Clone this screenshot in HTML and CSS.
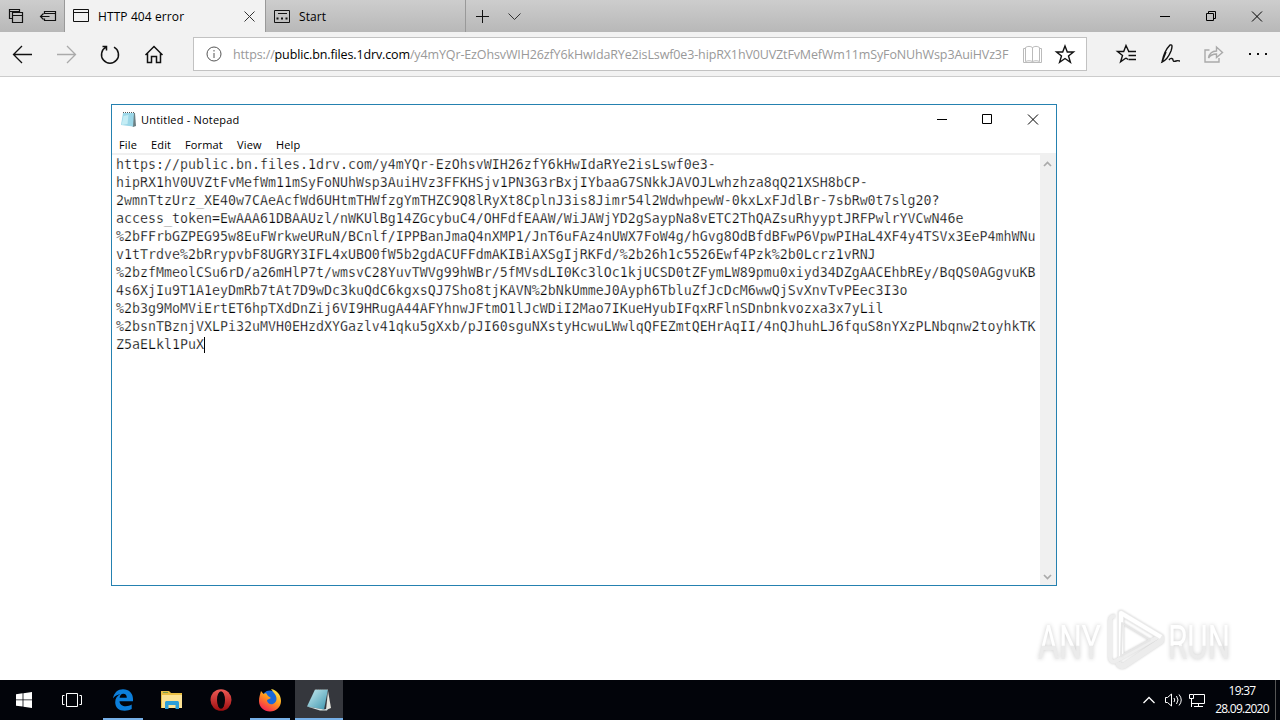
FILE: index.html
```html
<!DOCTYPE html>
<html lang="en">
<head>
    <meta charset="UTF-8">
    <meta name="viewport" content="width=device-width, initial-scale=1.0">
    <title>HTTP 404 error</title>
    <link rel="stylesheet" href="styles.css">
</head>
<body>
    <div class="desktop">
        <!-- browser tabs -->
        <div class="tabbar">
            <div class="tab-tools">
                <svg width="65" height="32" viewBox="0 0 65 32" fill="none" stroke="#111" stroke-width="1.200">
                    <path d="M12.500 18.500h-3v-9h10v3M9.500 11.500h10M12.500 12.500h10v10h-10zM12.500 15.500h10"/>
                    <path d="M44.500 14v-2.500h11v9h-11v-2M44.500 13.500h11M40.500 16.500h9M43.500 13.500l-3 3 3 3"/>
                </svg>
            </div>
            <div class="tab active">
                <svg width="16" height="14" viewBox="0 0 16 14" fill="none" stroke="#111"><path d="M.5.5h15v12H.5zM.5 3.500h15"/></svg>
                <span class="tab-title">HTTP 404 error</span>
                <svg class="tab-close" width="11" height="11" viewBox="0 0 11 11" stroke="#333"><path d="M.5.5l10 10M10.500.5l-10 10"/></svg>
            </div>
            <div class="tab">
                <svg width="16" height="13" viewBox="0 0 16 13" fill="none" stroke="#111"><path d="M.5.5h15v12H.5zM4 3.500h9"/><path d="M2.500 7.500h2v2h-2zM7 7.500h2v2H7zM11.500 7.500h2v2h-2z" fill="#111" stroke="none"/></svg>
                <span class="tab-title">Start</span>
            </div>
            <div class="tab-actions">
                <svg width="60" height="32" viewBox="0 0 60 32" fill="none" stroke="#111"><path d="M10 16.500h13M16.500 10v13"/><path d="M42.500 13.500l6 6 6-6" stroke="#333"/></svg>
            </div>
            <svg class="window-buttons" width="138" height="32" viewBox="0 0 138 32" fill="none" stroke="#000">
                <path d="M18 16.500h10M64.500 13.500h7v7h-7zM66.500 13v-1.500h7v7H72M110 11.500l10 10M120 11.500l-10 10"/>
            </svg>
        </div>

        <!-- address bar -->
        <div class="toolbar">
            <svg class="nav-buttons" width="193" height="44" viewBox="0 0 193 44" fill="none" stroke="#111" stroke-width="1.300">
                <path d="M32 22.500H13.500M22 14l-8.500 8.500L22 31"/>
                <path d="M57 22.500h18.500M67 14l8.500 8.500L67 31" stroke="#aaa"/>
                <path d="M106 15.200a8.500 8.500 0 1 0 8 0M102.500 14.500h4v4" stroke-width="1.500"/>
                <path d="M145.500 23l8.500-8.500 8.500 8.500M147.500 21.500v9h4v-6h5v6h4v-9" stroke-width="1.500"/>
            </svg>
            <div class="address">
                <svg width="16" height="16" viewBox="0 0 16 16" fill="none" stroke="#555"><circle cx="8" cy="8" r="7"/><path d="M8 7v5M8 4v1.500"/></svg>
                <div class="url">https://<span class="host">public.bn.files.1drv.com</span>/y4mYQr-EzOhsvWIH26zfY6kHwIdaRYe2isLswf0e3-hipRX1hV0UVZtFvMefWm11mSyFoNUhWsp3AuiHVz3F</div>
                <svg width="72" height="32" viewBox="0 0 72 32" fill="none">
                    <path d="M18.500 9.500c-2-1.500-5-1.500-7 0v14c2-1 5-1 7 0 2-1 5-1 7 0v-14c-2-1.500-5-1.500-7 0zM18.500 9.500v14M11.500 10.500h-2v14h18v-14h-2" stroke="#bbb"/>
                    <path d="M51 8l2.300 6h6.200l-5 4 1.900 6.300-5.400-3.800-5.400 3.800 1.900-6.300-5-4h6.200z" stroke="#111" stroke-width="1.400"/>
                </svg>
            </div>
            <svg class="hub-buttons" width="193" height="44" viewBox="0 0 193 44" fill="none" stroke="#111" stroke-width="1.400">
                <path d="M45 19.500h-3.200L39 13.500l-2.300 6h-6.200l5 4-1.900 6.300 5.400-3.800M41 19.500h8M41.500 23.500H49M41.500 27.500H49M39 26l2 1.500"/>
                <path d="M75 30c1-5 4-13 8-17 3-1 2 3 1 6-2 5-4 9-9 11l4-10M82 28c2-3 4-1 4 0s1 2 3 1 3 0 4 0"/>
                <path d="M122.500 18h-4.500v12h14v-4M121.500 26c1-5 4-7 8-7v-4l6 5.500-6 5v-3.500c-4 0-6 1-8 4z" stroke="#aaa"/>
                <path d="M162 21h2v2h-2zM170 21h2v2h-2zM178 21h2v2h-2z" fill="#111" stroke="none"/>
            </svg>
        </div>

        <div class="page">
            <svg class="watermark" width="210" height="76" viewBox="0 0 210 76">
                <defs>
                    <linearGradient id="fade" x1="0" y1="0" x2="0" y2="1">
                        <stop offset="0.550" stop-color="#fff"/>
                        <stop offset="0.560" stop-color="#ebebeb"/>
                    </linearGradient>
                </defs>
                <g class="mark-text" fill="url(#fade)">
                    <text x="9" y="57" textLength="63" lengthAdjust="spacingAndGlyphs">ANY</text>
                    <text x="139" y="57" textLength="62" lengthAdjust="spacingAndGlyphs">RUN</text>
                </g>
                <g class="mark-logo" fill="none" stroke-linejoin="round">
                    <path d="M86 14c-4 0-5 2-5 5v36c0 4 3 6 6 4l42-24" stroke="#eee" stroke-width="4"/>
                    <path d="M92 56V11l40 24v4L96 63c-3 2-6 1-7-3" stroke="#ececec" stroke-width="6"/>
                    <path d="M92 54V11l40 24" stroke="#fff" stroke-width="4"/>
                    <path d="M93 21l28 17-29 16z" stroke="#e6e6e6" stroke-width="2"/>
                </g>
            </svg>
        </div>

        <!-- taskbar -->
        <div class="taskbar">
            <div class="task">
                <svg width="16" height="16" viewBox="0 0 16 16" fill="#fff"><path d="M0 2.200l6.600-.9v6.200H0zM7.400 1.200L16 0v7.500H7.400zM0 8.300h6.600v6.300L0 13.700zM7.400 8.300H16V16l-8.600-1.200z"/></svg>
            </div>
            <div class="task view-button">
                <svg width="20" height="14" viewBox="0 0 20 14" fill="none" stroke="#fff"><path d="M4.500.5h11v13h-11zM2.500 2.500h-2v9h2M17.500 2.500h2v9h-2"/></svg>
            </div>
            <div class="task running">
                <svg width="20" height="22" viewBox="0 0 20 22" fill="#0c7fdb"><path d="M0 9.500C1 3.500 5 .3 10 .3c6 0 10 4 10 9.700v2.300H6.500c.2 3.500 3 5 6.200 5 2.200 0 4.300-.7 6-1.700v4.500c-2 1-4.500 1.600-7 1.600-6 0-9.500-3.300-9.500-8.500 0-3.700 2-6.700 5.200-8.200C4.300 5.700 1.800 7 0 9.500zM6.600 8.800h7.200c0-2.500-1.300-4-3.500-4s-3.500 1.700-3.700 4z"/></svg>
            </div>
            <div class="task">
                <svg width="22" height="18" viewBox="0 0 22 18"><path d="M0 0h8l2 2h11v15H0z" fill="#e9bf45"/><path d="M1 4h20v13H1z" fill="#fbe294"/><path d="M2 1h5v1H2z" fill="#7a9c4d"/><path d="M4 18v-6c0-1.500.5-2 2-2h10c1.500 0 2 .5 2 2v6h-3.500v-4h-7v4z" fill="#2c9fd9"/></svg>
            </div>
            <div class="task">
                <svg width="22" height="22" viewBox="0 0 22 22">
                    <defs><linearGradient id="opera" x1="0" y1="0" x2="0" y2="1"><stop offset="0" stop-color="#ee5a55"/><stop offset="1" stop-color="#9d0d0f"/></linearGradient></defs>
                    <ellipse cx="11" cy="11" rx="10.500" ry="10.800" fill="url(#opera)"/><ellipse cx="11" cy="11" rx="4" ry="8.800" fill="#05060b"/>
                </svg>
            </div>
            <div class="task running">
                <svg width="24" height="24" viewBox="0 0 24 24">
                    <defs><linearGradient id="fox" x1="0.800" y1="0" x2="0.200" y2="1"><stop offset="0" stop-color="#fff04a"/><stop offset="0.450" stop-color="#ff9a1a"/><stop offset="1" stop-color="#f51858"/></linearGradient></defs>
                    <circle cx="12" cy="11" r="8.500" fill="#1768d8"/>
                    <path d="M3 3l2.500 3L8 5l2 3 3 2-4 2c0 3 3 5 6 4 5-2 4-8 1-11l-3-4c6 1 10 6 10 12 0 6-5 10.500-11 10.500S1 19 1 13C1 9 2 7 3 3z" fill="url(#fox)"/>
                </svg>
            </div>
            <div class="task running current">
                <svg width="26" height="24" viewBox="0 0 26 24">
                    <defs><linearGradient id="pad" x1="0" y1="0" x2="1" y2="1"><stop offset="0" stop-color="#c9edf2"/><stop offset="1" stop-color="#3c94ad"/></linearGradient></defs>
                    <path d="M22 3l3 17-5 2z" fill="#e6e6df"/><path d="M9 1.500h13l-4 20L1 18.500z" fill="url(#pad)"/><path d="M1 18.500l17 3 4-1-1 2H14z" fill="#d7e5e5"/><path d="M9 1.500h13" stroke="#777" stroke-dasharray="1 1"/>
                </svg>
            </div>
            <div class="tray">
                <svg width="70" height="20" viewBox="0 0 70 20" fill="none" stroke="#fff">
                    <path d="M3.500 13l5.500-5.500 5.500 5.500" stroke-width="1.300"/>
                    <path d="M25.500 7.500h2l4-3.500v12l-4-3.500h-2zM34 8q1.500 2 0 4M36.500 6q3 4 0 8M39 4.500q4.500 5.500 0 11"/>
                    <path d="M54 4.500h10.500v9H51.500V9M49.500 4.500h4v4h-4zM58.500 13.500v3M54 16.500h9M51.500 8.500V17"/>
                </svg>
                <div class="clock">
                    <div class="time">19:37</div>
                    <div class="date">28.09.2020</div>
                </div>
                <div class="show-desktop"></div>
            </div>
        </div>

        <!-- notepad window -->
        <div class="notepad">
            <div class="titlebar">
                <svg width="17" height="17" viewBox="0 0 17 17"><path d="M4 2h11l1 13-3 1z" fill="#6c7f83"/><path d="M3 2h11l-1 13.500L1 14z" fill="#9bd7e8"/><path d="M3.500 5l5-1-1 9-6 1z" fill="#c4edf5"/><path d="M3 1.500h12" stroke="#555" stroke-dasharray="1 1"/></svg>
                <span class="title">Untitled - Notepad</span>
                <svg class="window-buttons" width="138" height="28" viewBox="0 0 138 28" fill="none" stroke="#000"><path d="M19 14.500h10M64.500 9.500h9v9h-9zM110 9.500l10 10M120 9.500l-10 10"/></svg>
            </div>
            <div class="menubar">
                <span class="menu file">File</span>
                <span class="menu edit">Edit</span>
                <span class="menu format">Format</span>
                <span class="menu view">View</span>
                <span class="menu help">Help</span>
            </div>
            <div class="editor">
<pre class="text">https://public.bn.files.1drv.com/y4mYQr-EzOhsvWIH26zfY6kHwIdaRYe2isLswf0e3-
hipRX1hV0UVZtFvMefWm11mSyFoNUhWsp3AuiHVz3FFKHSjv1PN3G3rBxjIYbaaG7SNkkJAVOJLwhzhza8qQ21XSH8bCP-
2wmnTtzUrz_XE40w7CAeAcfWd6UHtmTHWfzgYmTHZC9Q8lRyXt8CplnJ3is8Jimr54l2WdwhpewW-0kxLxFJdlBr-7sbRw0t7slg20?
access_token=EwAAA61DBAAUzl/nWKUlBg14ZGcybuC4/OHFdfEAAW/WiJAWjYD2gSaypNa8vETC2ThQAZsuRhyyptJRFPwlrYVCwN46e
%2bFFrbGZPEG95w8EuFWrkweURuN/BCnlf/IPPBanJmaQ4nXMP1/JnT6uFAz4nUWX7FoW4g/hGvg8OdBfdBFwP6VpwPIHaL4XF4y4TSVx3EeP4mhWNu
v1tTrdve%2bRrypvbF8UGRY3IFL4xUBO0fW5b2gdACUFFdmAKIBiAXSgIjRKFd/%2b26h1c5526Ewf4Pzk%2b0Lcrz1vRNJ
%2bzfMmeolCSu6rD/a26mHlP7t/wmsvC28YuvTWVg99hWBr/5fMVsdLI0Kc3lOc1kjUCSD0tZFymLW89pmu0xiyd34DZgAACEhbREy/BqQS0AGgvuKB
4s6XjIu9T1A1eyDmRb7tAt7D9wDc3kuQdC6kgxsQJ7Sho8tjKAVN%2bNkUmmeJ0Ayph6TbluZfJcDcM6wwQjSvXnvTvPEec3I3o
%2b3g9MoMViErtET6hpTXdDnZij6VI9HRugA44AFYhnwJFtmO1lJcWDiI2Mao7IKueHyubIFqxRFlnSDnbnkvozxa3x7yLil
%2bsnTBznjVXLPi32uMVH0EHzdXYGazlv41qku5gXxb/pJI60sguNXstyHcwuLWwlqQFEZmtQEHrAqII/4nQJhuhLJ6fquS8nYXzPLNbqnw2toyhkTK
Z5aELkl1PuX<span class="caret"></span></pre>
                <div class="scrollbar">
                    <svg width="9" height="6" viewBox="0 0 9 6" fill="none" stroke="#aaa" stroke-width="1.700"><path d="M1 5l3.500-3.500L8 5"/></svg>
                    <svg width="9" height="6" viewBox="0 0 9 6" fill="none" stroke="#aaa" stroke-width="1.700"><path d="M1 1l3.500 3.500L8 1"/></svg>
                </div>
            </div>
        </div>
    </div>
</body>
</html>
```
FILE: styles.css
```css
body {
    margin: 0;
    font-family: "Open Sans", "Noto Sans", sans-serif;
    font-size: 12px;
    color: #000;
    background: #fff;
    overflow: hidden;
}
svg {
    display: block;
    flex: none;
}
.desktop {
    position: relative;
    width: 1280px;
    height: 720px;
    display: flex;
    flex-direction: column;
}
.tabbar {
    height: 32px;
    display: flex;
    background: linear-gradient(#cdcdcd, #b8b8b8);
}
.tab-tools {
    width: 64px;
    border-right: 1px solid #999;
    overflow: hidden;
}
.tab {
    box-sizing: border-box;
    width: 200px;
    padding: 0 10px 0 8px;
    display: flex;
    align-items: center;
    border-right: 1px solid #999;
}
.tab.active {
    padding-left: 8px;
    background: #f2f2f2;
    width: 201px;
}
.tab-title {
    margin-left: 9px;
    letter-spacing: 0.1px;
}
.tab-close {
    margin-left: auto;
}
.window-buttons {
    margin-left: auto;
}
.toolbar {
    box-sizing: border-box;
    height: 45px;
    display: flex;
    background: #f2f2f2;
    border-bottom: 1px solid #ccc;
}
.address {
    box-sizing: border-box;
    width: 894px;
    height: 34px;
    margin-top: 5px;
    padding-left: 12px;
    display: flex;
    align-items: center;
    background: #fff;
    border: 1px solid #c2c2c2;
}
.url {
    width: 781px;
    margin-left: 11px;
    font-size: 12.5px;
    letter-spacing: -0.13px;
    color: #999;
    white-space: nowrap;
}
.host {
    color: #000;
}
.page {
    flex: 1;
    display: flex;
    justify-content: flex-end;
    align-items: flex-end;
}
.watermark {
    margin: 0 41px 2px 0;
}
.mark-text {
    font-family: Roboto, sans-serif;
    font-size: 48px;
    filter: drop-shadow(0 0 2px #ccc);
}
.mark-logo {
    filter: drop-shadow(0 0 1px #ccc);
}
.taskbar {
    height: 40px;
    display: flex;
    background: #02040a;
    color: #fff;
}
.task {
    box-sizing: border-box;
    width: 48px;
    height: 40px;
    margin-right: 1px;
    display: flex;
    justify-content: center;
    align-items: center;
}
.task:first-child {
    margin-right: 0;
}
.view-button {
    margin-right: 3px;
}
.running {
    background: linear-gradient(#76b0e8, #76b0e8) bottom center / 40px 2px no-repeat;
}
.current {
    background: linear-gradient(#76b0e8, #76b0e8) bottom / 100% 2px no-repeat #35373d;
}
.tray {
    margin-left: auto;
    display: flex;
    align-items: center;
}
.clock {
    width: 62px;
    margin: 0 2px 0 1px;
    text-align: center;
    font-size: 12px;
    line-height: 18px;
    letter-spacing: -0.75px;
}
.show-desktop {
    width: 4px;
    height: 40px;
    border-left: 1px solid #555;
}
.notepad {
    position: absolute;
    left: 111px;
    top: 104px;
    box-sizing: border-box;
    width: 946px;
    height: 482px;
    display: flex;
    flex-direction: column;
    background: #fff;
    border: 1px solid #2581b0;
    font-size: 11px;
}
.titlebar {
    height: 29px;
    padding-left: 8px;
    display: flex;
    align-items: center;
}
.titlebar .window-buttons {
    margin-bottom: 2px;
}
.title {
    margin-left: 4px;
    letter-spacing: 0.2px;
}
.menubar {
    box-sizing: border-box;
    height: 21px;
    padding-left: 7px;
    display: flex;
    line-height: 21px;
    letter-spacing: 0.15px;
    border-bottom: 2px solid #f0f0f0;
}
.file {
    width: 32px;
}
.edit {
    width: 34px;
}
.format {
    width: 52px;
}
.view {
    width: 39px;
}
.editor {
    flex: 1;
    display: flex;
}
.text {
    flex: 1;
    margin: 0;
    padding: 1px 0 0 4px;
    font-family: "DejaVu Sans Mono", monospace;
    font-size: 13.29px;
    line-height: 18px;
    -webkit-text-stroke: 0.25px #fff;
}
.caret {
    display: inline-block;
    width: 1px;
    height: 16px;
    background: #000;
    vertical-align: -4px;
}
.scrollbar {
    box-sizing: border-box;
    width: 16px;
    padding: 6px 1px 5px 0;
    display: flex;
    flex-direction: column;
    align-items: center;
    justify-content: space-between;
    background: #f0f0f0;
}
```
